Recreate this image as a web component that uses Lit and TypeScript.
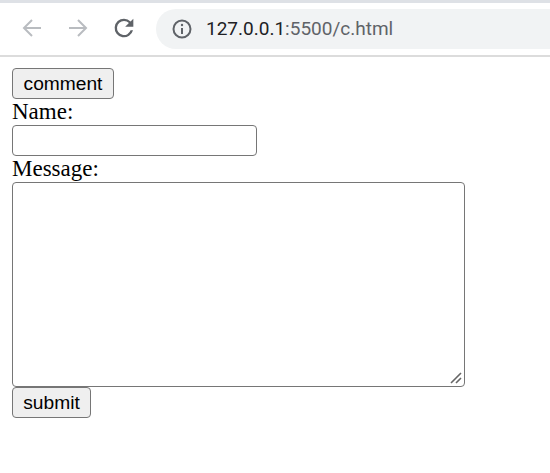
import { LitElement, html, css } from "lit";
import { customElement } from "lit/decorators.js";

@customElement("app-root")
export class AppRoot extends LitElement {
  static styles = css`
    :host { display: block; width: 550px; height: 473px; background: #fff; overflow: hidden; }
    .strip { height: 3px; background: #dee1e6; }
    .toolbar {
      height: 52px; box-sizing: border-box; display: flex; align-items: center;
      padding: 0 0 2px 20px; background: #fff;
    }
    .rule { height: 2px; background: #dcdcdc; }
    .icon { width: 24px; height: 24px; flex: none; display: block; }
    .back { margin-right: 22px; }
    .fwd { margin-right: 20px; }
    .reload { width: 28px; height: 28px; margin-right: 18px; }
    .omni {
      flex: 1; height: 40px; margin-top: 2px; border-radius: 20px 0 0 20px; background: #f1f3f4;
      display: flex; align-items: center; padding-left: 14px;
      font: 19px/24px Roboto, "Noto Sans", sans-serif; color: #202124;
    }
    .omni svg { width: 24px; height: 24px; margin-right: 12px; flex: none; }
    .muted { color: #5f6368; }
    .page {
      display: flex; flex-direction: column; align-items: flex-start;
      padding: 11px 0 0 12px;
      font: 23px/26px "Liberation Serif", serif; color: #000;
    }
    label { display: block; height: 26px; line-height: 25px; }
    button {
      box-sizing: border-box; height: 31px; margin: 0; padding: 0 10px;
      font: 19.2px "Liberation Sans", Arial, sans-serif; color: #000;
      background: #efefef; border: 1px solid #767676; border-radius: 4px;
    }
    .comment { width: 102px; }
    .submit { width: 79px; }
    input {
      box-sizing: border-box; width: 245px; height: 31px; margin: 0; padding: 1px 2px;
      border: 1px solid #767676; border-radius: 4px; background: #fff;
    }
    .area { position: relative; width: 453px; height: 205px; }
    textarea {
      box-sizing: border-box; display: block; width: 100%; height: 100%; margin: 0; padding: 2px;
      border: 1px solid #767676; border-radius: 4px; background: #fff; resize: none;
    }
    .grip { position: absolute; right: 3px; bottom: 3px; width: 12px; height: 12px; }
  `;

  render() {
    return html`
      <div class="strip"></div>
      <div class="toolbar">
        <svg class="icon back" viewBox="0 0 24 24" fill="none" stroke="#b9bcc0" stroke-width="2">
          <path d="M21 12H4M12 4l-8 8 8 8" />
        </svg>
        <svg class="icon fwd" viewBox="0 0 24 24" fill="none" stroke="#b9bcc0" stroke-width="2">
          <path d="M3 12h17M12 4l8 8-8 8" />
        </svg>
        <svg class="icon reload" viewBox="0 0 24 24" fill="#5f6368">
          <path d="M17.65 6.35A7.96 7.96 0 0 0 12 4a8 8 0 1 0 7.73 10h-2.08A6 6 0 1 1 12 6c1.66 0 3.14.69 4.22 1.78L13 11h7V4l-2.35 2.35z" />
        </svg>
        <div class="omni">
          <svg viewBox="0 0 24 24" fill="none">
            <circle cx="12" cy="12" r="8.5" stroke="#5f6368" stroke-width="2" />
            <path d="M12 11v6" stroke="#5f6368" stroke-width="2" />
            <circle cx="12" cy="8" r="1.2" fill="#5f6368" />
          </svg>
          <span>127.0.0.1<span class="muted">:5500/c.html</span></span>
        </div>
      </div>
      <div class="rule"></div>
      <div class="page">
        <button class="comment">comment</button>
        <label>Name:</label>
        <input type="text" />
        <label>Message:</label>
        <div class="area">
          <textarea></textarea>
          <svg class="grip" viewBox="0 0 12 12" fill="none" stroke="#666" stroke-width="1.6">
            <path d="M1 11L11 1M6 11l5-5" />
          </svg>
        </div>
        <button class="submit">submit</button>
      </div>
    `;
  }
}
